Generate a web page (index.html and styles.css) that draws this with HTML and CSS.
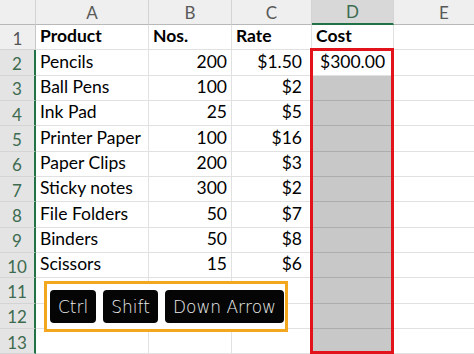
FILE: index.html
```html
<!DOCTYPE html>
<html>
<head>
<meta charset="utf-8">
<link rel="stylesheet" href="styles.css">
</head>
<body>
<div class="sheet">
  <div class="grid">
    <div class="corner"></div>
    <div class="colhead">A</div>
    <div class="colhead">B</div>
    <div class="colhead">C</div>
    <div class="colhead sel">D</div>
    <div class="colhead last">E</div>

    <div class="rowhead">1</div>
    <div class="cell b">Product</div>
    <div class="cell b">Nos.</div>
    <div class="cell b">Rate</div>
    <div class="cell b">Cost</div>
    <div class="cell last"></div>

    <div class="rowhead sel">2</div>
    <div class="cell">Pencils</div>
    <div class="cell num">200</div>
    <div class="cell num c">$1.50</div>
    <div class="cell d1">$300.00</div>
    <div class="cell last"></div>

    <div class="rowhead sel">3</div>
    <div class="cell">Ball Pens</div>
    <div class="cell num">100</div>
    <div class="cell num c">$2</div>
    <div class="cell fill"></div>
    <div class="cell last"></div>

    <div class="rowhead sel">4</div>
    <div class="cell">Ink Pad</div>
    <div class="cell num">25</div>
    <div class="cell num c">$5</div>
    <div class="cell fill"></div>
    <div class="cell last"></div>

    <div class="rowhead sel">5</div>
    <div class="cell">Printer Paper</div>
    <div class="cell num">100</div>
    <div class="cell num c">$16</div>
    <div class="cell fill"></div>
    <div class="cell last"></div>

    <div class="rowhead sel">6</div>
    <div class="cell">Paper Clips</div>
    <div class="cell num">200</div>
    <div class="cell num c">$3</div>
    <div class="cell fill"></div>
    <div class="cell last"></div>

    <div class="rowhead sel">7</div>
    <div class="cell">Sticky notes</div>
    <div class="cell num">300</div>
    <div class="cell num c">$2</div>
    <div class="cell fill"></div>
    <div class="cell last"></div>

    <div class="rowhead sel">8</div>
    <div class="cell">File Folders</div>
    <div class="cell num">50</div>
    <div class="cell num c">$7</div>
    <div class="cell fill"></div>
    <div class="cell last"></div>

    <div class="rowhead sel">9</div>
    <div class="cell">Binders</div>
    <div class="cell num">50</div>
    <div class="cell num c">$8</div>
    <div class="cell fill"></div>
    <div class="cell last"></div>

    <div class="rowhead sel">10</div>
    <div class="cell">Scissors</div>
    <div class="cell num">15</div>
    <div class="cell num c">$6</div>
    <div class="cell fill"></div>
    <div class="cell last"></div>

    <div class="rowhead sel">11</div>
    <div class="cell"></div>
    <div class="cell"></div>
    <div class="cell"></div>
    <div class="cell fill"></div>
    <div class="cell last"></div>

    <div class="rowhead sel">12</div>
    <div class="cell"></div>
    <div class="cell"></div>
    <div class="cell"></div>
    <div class="cell fill"></div>
    <div class="cell last"></div>

    <div class="rowhead sel">13</div>
    <div class="cell"></div>
    <div class="cell"></div>
    <div class="cell"></div>
    <div class="cell fill"></div>
    <div class="cell last"></div>
  </div>

  <div class="selbox"></div>

  <div class="keys">
    <span class="key">Ctrl</span>
    <span class="key">Shift</span>
    <span class="key">Down Arrow</span>
  </div>
</div>
</body>
</html>
```
FILE: styles.css
```css
html, body {
  margin: 0;
  padding: 0;
  background: #ffffff;
}

.sheet {
  position: relative;
  width: 474px;
  height: 354px;
  overflow: hidden;
  font-family: Lato, "Liberation Sans", sans-serif;
}

.grid {
  display: grid;
  grid-template-columns: 36px 113px 83px 80px 82px 100px;
  grid-template-rows: 25px repeat(13, 25.33px);
}

.corner,
.colhead {
  background: #efefef;
  border-right: 1px solid #d4d4d4;
  border-bottom: 1px solid #b8b8b8;
}

.colhead {
  display: flex;
  align-items: center;
  justify-content: center;
  color: #595959;
  font-size: 17px;
}

.colhead.sel {
  background: #d8d8d8;
  color: #3d6b50;
  border-bottom: 2px solid #217346;
}

.colhead.last {
  border-right: none;
}

.rowhead {
  background: #efefef;
  border-right: 1px solid #c8c8c8;
  border-bottom: 1px solid #d4d4d4;
  display: flex;
  align-items: center;
  justify-content: center;
  color: #555555;
  font-size: 17px;
  padding-top: 2px;
  box-sizing: border-box;
}

.rowhead.sel {
  background: #e4e4e4;
  color: #3d6b50;
  border-right: 2px solid #217346;
}

.cell {
  border-right: 1px solid #e1e1e1;
  border-bottom: 1px solid #e1e1e1;
  display: flex;
  align-items: flex-end;
  padding: 0 4px 3px 4px;
  box-sizing: border-box;
  font-size: 17.5px;
  color: #000000;
  white-space: nowrap;
  line-height: 20px;
}

.cell.b {
  font-weight: bold;
}

.cell.num {
  justify-content: flex-end;
}

.cell.c {
  padding-right: 9px;
}

.cell.d1 {
  padding-left: 8px;
}

.cell.fill {
  background: #c8c8c8;
  border-bottom: 1px solid #adadad;
}

.cell.last {
  border-right: none;
}

.selbox {
  position: absolute;
  left: 310px;
  top: 48px;
  width: 84px;
  height: 306px;
  border: 3px solid #e3131b;
  box-sizing: border-box;
}

.keys {
  position: absolute;
  left: 44px;
  top: 281px;
  width: 244px;
  height: 51px;
  border: 3px solid #f2a71e;
  box-sizing: border-box;
  background: #ffffff;
  display: flex;
  align-items: center;
  gap: 7px;
  padding: 0 0 0 3px;
}

.key {
  background: #050505;
  color: #ececec;
  border-radius: 4px;
  height: 33px;
  display: flex;
  align-items: center;
  justify-content: center;
  font-family: "DejaVu Sans", sans-serif;
  font-weight: 200;
  font-size: 17px;
  padding: 0 8px;
}
```
